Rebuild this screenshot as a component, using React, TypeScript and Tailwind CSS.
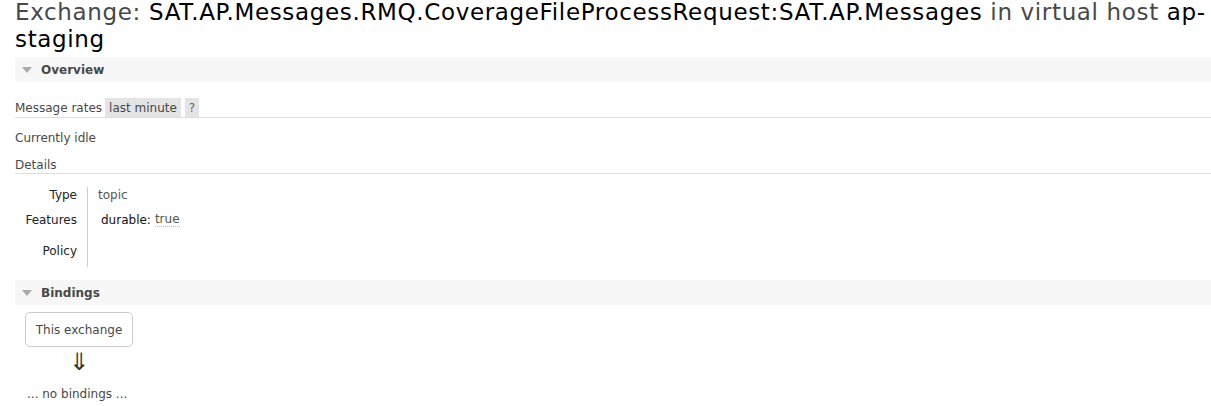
import React from "react"

function SectionHeader({ title }: { title: string }) {
  return (
    <div className="flex items-center h-[25px] bg-[#f7f7f7] pl-[7px]">
      <svg width="10" height="6" viewBox="0 0 10 6" className="mr-[9px]">
        <path d="M0 0 L10 0 L5 6 Z" fill="#aaaaaa" />
      </svg>
      <span className="font-bold text-[#484848]">{title}</span>
    </div>
  )
}

export default function App() {
  return (
    <div
      className="min-h-screen bg-white text-[12px] text-[#484848] pl-[15px] overflow-hidden"
      style={{ fontFamily: '"DejaVu Sans", Verdana, sans-serif' }}
    >
      <h1 className="text-[23px] leading-[27px] tracking-[0.65px] -mt-[1px] text-[#484848] font-normal">
        Exchange:{" "}
        <span className="text-black">SAT.AP.Messages.RMQ.CoverageFileProcessRequest:SAT.AP.Messages</span>{" "}
        in virtual host <span className="text-black">ap-staging</span>
      </h1>

      <div className="mt-[4px]">
        <SectionHeader title="Overview" />

        <div className="mt-[16px] flex items-center h-[20px] border-b border-[#dddddd]">
          <span className="mr-[3px]">Message rates</span>
          <span className="bg-[#e4e4e4] h-full flex items-center px-[4px] mr-[4px]">last minute</span>
          <span className="bg-[#e4e4e4] h-full flex items-center px-[4px] text-[#666]">?</span>
        </div>

        <div className="mt-[13px] leading-[14px]">Currently idle</div>

        <div className="mt-[13px] pb-[1px] border-b border-[#dddddd] leading-[14px]">Details</div>

        <div className="flex mt-[8px] ml-[10px]">
          <div className="flex flex-col items-end w-[62px] pr-[10px] text-[#222]">
            <div className="h-[25px] flex items-center">Type</div>
            <div className="h-[25px] flex items-center">Features</div>
            <div className="h-[38px] flex items-center">Policy</div>
          </div>
          <div className="flex flex-col pl-[10px] border-l border-[#cccccc] mt-[5px] mb-[3px]">
            <div className="h-[25px] flex items-center text-[#555] -mt-[5px]">topic</div>
            <div className="h-[25px] flex items-center pl-[3px]">
              <span className="text-[#111] mr-[4px]">durable:</span>
              <span className="text-[#555] border-b border-dotted border-[#bbbbbb] leading-[13px]">true</span>
            </div>
            <div className="h-[33px]" />
          </div>
        </div>

        <div className="mt-[10px]">
          <SectionHeader title="Bindings" />
        </div>

        <div className="ml-[10px] mt-[7px] flex flex-col items-start">
          <div className="w-[108px] h-[35px] border border-[#cccccc] rounded-[5px] flex items-center justify-center text-[#484848]">
            This exchange
          </div>
          <div className="w-[108px] flex justify-center text-[24px] leading-[26px] text-[#333] mt-[2px]">⇓</div>
          <div className="mt-[10px] ml-[2px]">... no bindings ...</div>
        </div>
      </div>
    </div>
  )
}
